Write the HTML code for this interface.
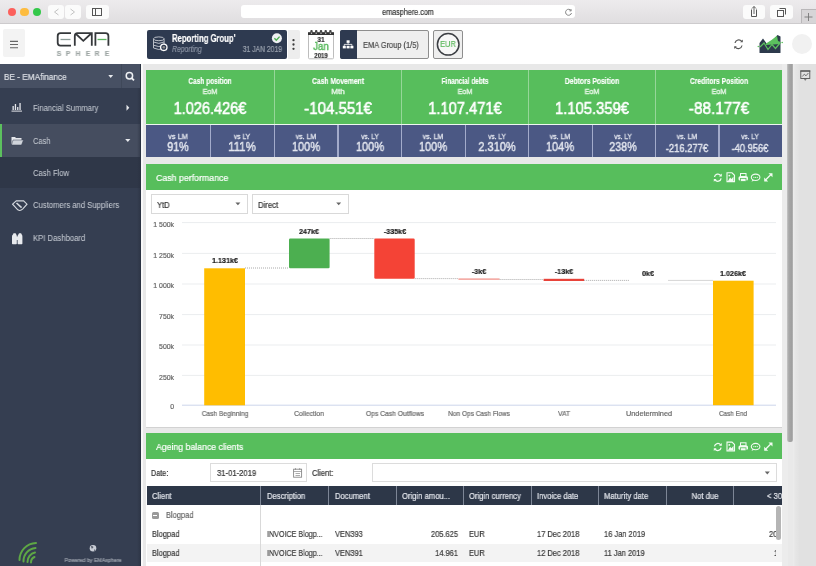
<!DOCTYPE html>
<html><head><meta charset="utf-8">
<style>
*{margin:0;padding:0;box-sizing:border-box}
html,body{width:816px;height:566px;overflow:hidden;background:#e9e9e9;font-family:"Liberation Sans",sans-serif}
.a{position:absolute}
.t{position:absolute;white-space:nowrap;line-height:1;-webkit-text-stroke:0.2px currentColor;will-change:transform}
svg{position:absolute;left:0;top:0}
</style></head><body>
<div class="a" style="left:0px;top:0px;width:816px;height:23px;background:linear-gradient(#edebed,#e0dee0);"></div>
<div class="a" style="left:0px;top:23px;width:816px;height:1px;background:#cdcbcd;"></div>
<div class="a" style="left:7.8px;top:7.8px;width:8.4px;height:8.4px;border-radius:50%;background:#fc605c"></div>
<div class="a" style="left:20.3px;top:7.8px;width:8.4px;height:8.4px;border-radius:50%;background:#fdbc40"></div>
<div class="a" style="left:32.8px;top:7.8px;width:8.4px;height:8.4px;border-radius:50%;background:#34c84a"></div>
<div class="a" style="left:48px;top:5px;width:16px;height:14px;background:#fbfbfb;border-radius:3px"></div>
<div class="a" style="left:65px;top:5px;width:16px;height:14px;background:#fbfbfb;border-radius:3px"></div>
<div class="a" style="left:86px;top:5px;width:23px;height:14px;background:#fbfbfb;border-radius:3px"></div>
<div class="a" style="left:241px;top:5px;width:334px;height:13px;background:#ffffff;border-radius:3px"></div>
<div class="t" style="left:408.00px;top:7.80px;font-size:8.5px;color:#333;transform-origin:50% 50%;transform:translateX(-50%) scaleX(0.847);">emasphere.com</div>
<div class="a" style="left:743px;top:5px;width:22px;height:14px;background:#fbfbfb;border-radius:3px"></div>
<div class="a" style="left:770px;top:5px;width:23px;height:14px;background:#fbfbfb;border-radius:3px"></div>
<div class="a" style="left:801px;top:9px;width:15px;height:14px;background:#d7d5d7;border-left:1px solid #b9b7b9;border-top:1px solid #b9b7b9"></div>
<svg width="816" height="24" viewBox="0 0 816 24">
<path d="M58.5 9 L54.5 12 L58.5 15" stroke="#c2c2c2" stroke-width="1" fill="none"/>
<path d="M70.5 9 L74.5 12 L70.5 15" stroke="#c2c2c2" stroke-width="1" fill="none"/>
<rect x="92.5" y="8.5" width="9" height="7" stroke="#555" stroke-width="1" fill="none"/>
<line x1="95.5" y1="8.5" x2="95.5" y2="15.5" stroke="#555" stroke-width="1"/>
<path d="M571 10.5 A3 3 0 1 0 571.5 13" stroke="#777" stroke-width="0.9" fill="none"/>
<path d="M571 9 L571.2 11 L569.3 10.8" stroke="#777" stroke-width="0.8" fill="none"/>
<path d="M751.5 9.5 L751.5 16.5 L756.5 16.5 L756.5 9.5" stroke="#555" stroke-width="1" fill="none"/>
<path d="M754 14 L754 6.5 M752 8.5 L754 6.5 L756 8.5" stroke="#555" stroke-width="0.9" fill="none"/>
<rect x="777.5" y="10.5" width="6" height="6" stroke="#555" stroke-width="1" fill="none"/>
<path d="M779.5 8.5 L785.5 8.5 L785.5 14.5" stroke="#555" stroke-width="1" fill="none"/>
<path d="M808.5 13 L808.5 21 M804.5 17 L812.5 17" stroke="#777" stroke-width="0.9"/>
</svg>
<div class="a" style="left:0px;top:24px;width:816px;height:40px;background:#ffffff;"></div>
<div class="a" style="left:3px;top:29px;width:22px;height:28px;background:#f3f3f3;border-radius:2px"></div>
<svg width="816" height="64" viewBox="0 0 816 64">
<path d="M10 41.3 H18 M10 44.5 H18 M10 47.7 H18" stroke="#666" stroke-width="1.15"/>
</svg>
<svg width="816" height="64" viewBox="0 0 816 64">
<g fill="none" stroke="#35383b" stroke-width="1.8">
<path d="M71 33.2 H60.5 Q57.7 33.2 57.7 36 V42.8 Q57.7 45.6 60.5 45.6 H71"/>
<path d="M74.8 45.8 V36 Q74.8 33.2 77.6 33.2 H91.8 V45.8 M75.5 33.5 L83.3 40.8 L91.2 33.5"/>
<path d="M95.4 45.8 V33.2 H105.6 Q108.4 33.2 108.4 36 V45.8"/>
</g>
<path d="M60.5 39.5 H70.5" stroke="#8c9c98" stroke-width="1.3"/>
<path d="M97.5 39.5 H106.5" stroke="#5ab55e" stroke-width="1.3"/>
</svg>
<div class="t" style="left:58.60px;top:50.37px;font-size:7.0px;color:#9ea6a4;font-weight:bold;transform-origin:50% 50%;transform:translateX(-50%) scaleX(0.950);">S</div>
<div class="t" style="left:68.20px;top:50.37px;font-size:7.0px;color:#9ea6a4;font-weight:bold;transform-origin:50% 50%;transform:translateX(-50%) scaleX(0.950);">P</div>
<div class="t" style="left:78.30px;top:50.37px;font-size:7.0px;color:#9ea6a4;font-weight:bold;transform-origin:50% 50%;transform:translateX(-50%) scaleX(0.950);">H</div>
<div class="t" style="left:87.90px;top:50.37px;font-size:7.0px;color:#9ea6a4;font-weight:bold;transform-origin:50% 50%;transform:translateX(-50%) scaleX(0.950);">E</div>
<div class="t" style="left:97.20px;top:50.37px;font-size:7.0px;color:#9ea6a4;font-weight:bold;transform-origin:50% 50%;transform:translateX(-50%) scaleX(0.950);">R</div>
<div class="t" style="left:107.20px;top:50.37px;font-size:7.0px;color:#9ea6a4;font-weight:bold;transform-origin:50% 50%;transform:translateX(-50%) scaleX(0.950);">E</div>
<div class="a" style="left:146.6px;top:30px;width:140.9px;height:28.6px;background:#2e3a50;border-radius:2px"></div>
<div class="a" style="left:287.5px;top:29.5px;width:12px;height:29px;background:#ededed;border-radius:0 2px 2px 0"></div>
<svg width="816" height="64" viewBox="0 0 816 64">
<g fill="none" stroke="#b9bec6" stroke-width="1">
<ellipse cx="158.8" cy="38.8" rx="5.3" ry="1.9"/>
<path d="M153.5 38.8 V48 Q158.8 51 164.1 48 V38.8 M153.5 42 Q158.8 44.8 164.1 42 M153.5 45.2 Q158.8 48 164.1 45.2"/>
</g>
<circle cx="163.8" cy="47.3" r="3.2" fill="#2e3a50" stroke="#fff" stroke-width="1.3"/>
<circle cx="163.8" cy="47.3" r="1.3" fill="#888"/>
<circle cx="276.9" cy="38.2" r="5" fill="#eef0f2"/>
<path d="M274.4 38.3 L276.3 40.2 L279.6 36.6" stroke="#4caf50" stroke-width="1.4" fill="none"/>
<circle cx="293.5" cy="40.2" r="1.15" fill="#3c3c3c"/>
<circle cx="293.5" cy="44.5" r="1.15" fill="#3c3c3c"/>
<circle cx="293.5" cy="48.8" r="1.15" fill="#3c3c3c"/>
</svg>
<div class="t" style="left:172.30px;top:34.17px;font-size:10.2px;color:#ffffff;font-weight:bold;transform-origin:0 50%;transform:scaleX(0.756);">Reporting Group'</div>
<div class="t" style="left:172.30px;top:44.52px;font-size:8.6px;color:#8a93a3;font-style:italic;transform-origin:0 50%;transform:scaleX(0.796);">Reporting</div>
<div class="t" style="left:282.30px;top:44.52px;font-size:8.6px;color:#9aa2ae;transform-origin:100% 50%;transform:translateX(-100%) scaleX(0.790);">31 JAN 2019</div>
<svg width="816" height="64" viewBox="0 0 816 64">
<rect x="308.5" y="33" width="25" height="25.8" rx="1" fill="#fff" stroke="#bdbdbd" stroke-width="1"/>
<rect x="308" y="32.2" width="26" height="2.8" fill="#333"/>
<g fill="#444">
<rect x="310.3" y="30" width="2.4" height="3.6" rx="1"/>
<rect x="315" y="30" width="2.4" height="3.6" rx="1"/>
<rect x="319.8" y="30" width="2.4" height="3.6" rx="1"/>
<rect x="324.5" y="30" width="2.4" height="3.6" rx="1"/>
<rect x="329.2" y="30" width="2.4" height="3.6" rx="1"/>
</g>
<g fill="#ccc">
<circle cx="311.5" cy="33.3" r="0.7"/><circle cx="316.2" cy="33.3" r="0.7"/><circle cx="321" cy="33.3" r="0.7"/><circle cx="325.7" cy="33.3" r="0.7"/><circle cx="330.4" cy="33.3" r="0.7"/>
</g>
</svg>
<div class="t" style="left:321.00px;top:35.91px;font-size:7.2px;color:#333;font-weight:bold;transform-origin:50% 50%;transform:translateX(-50%) scaleX(0.900);">31</div>
<div class="t" style="left:321.00px;top:41.32px;font-size:11.2px;color:#62bd66;transform-origin:50% 50%;transform:translateX(-50%) scaleX(0.864);-webkit-text-stroke:0.55px #62bd66;">Jan</div>
<div class="t" style="left:321.00px;top:52.61px;font-size:6.6px;color:#333;font-weight:bold;transform-origin:50% 50%;transform:translateX(-50%) scaleX(0.920);">2019</div>
<div class="a" style="left:339.5px;top:29.5px;width:89px;height:29.5px;background:#efefef;border:1px solid #8e8e8e;border-radius:2px"></div>
<div class="a" style="left:339.5px;top:29.5px;width:17.5px;height:29.5px;background:#2e3a50;border-radius:2px 0 0 2px"></div>
<svg width="816" height="64" viewBox="0 0 816 64">
<g fill="#fff">
<rect x="346.6" y="40.3" width="3" height="2.6"/>
<rect x="342.8" y="45.8" width="3" height="2.6"/>
<rect x="346.6" y="45.8" width="3" height="2.6"/>
<rect x="350.4" y="45.8" width="3" height="2.6"/>
</g>
<path d="M348.1 42.9 V44.4 M344.3 45.8 V44.4 H351.9 V45.8" stroke="#fff" stroke-width="0.8" fill="none"/>
</svg>
<div class="t" style="left:362.50px;top:40.17px;font-size:9.6px;color:#4a4a4a;transform-origin:0 50%;transform:scaleX(0.775);">EMA Group (1/5)</div>
<div class="a" style="left:433.3px;top:29.5px;width:29.7px;height:29.5px;background:#efefef;border:1px solid #8e8e8e;border-radius:2px"></div>
<svg width="816" height="64" viewBox="0 0 816 64">
<circle cx="448.2" cy="44.3" r="10.8" fill="#f7f7f7" stroke="#3c3f44" stroke-width="1.5"/>
</svg>
<div class="t" style="left:448.20px;top:40.19px;font-size:8.4px;color:#5cb85c;transform-origin:50% 50%;transform:translateX(-50%) scaleX(0.880);">EUR</div>
<svg width="816" height="64" viewBox="0 0 816 64">
<path d="M735 43 A3.8 3.8 0 0 1 741.7 41.3 M742 45.5 A3.8 3.8 0 0 1 735.3 47.2" stroke="#555" stroke-width="1.2" fill="none"/>
<path d="M742.8 39.6 V42.2 H740.2 Z M734.2 48.9 V46.3 H736.8 Z" fill="#555"/>
<path d="M759.5 43 L763 38.5 L767 44 L772 41 L777.5 35 L780.5 36.5 L780.5 52.5 Q780.5 53 780 53 L760 53 Q759.5 53 759.5 52.5 Z" fill="#2d3a4c"/>
<path d="M766 43.5 L771.5 40 L777 35.7 L778 41 L780.5 42 L780.5 44 L766 45 Z" fill="#5bc05e"/>
<path d="M760 47 L764 43 L768 49.5 L772 44.5 L775.5 48.5 L780 43" stroke="#5bc05e" stroke-width="1.2" fill="none"/>
<circle cx="758.3" cy="46.5" r="0.8" fill="#5bc05e"/>
<circle cx="782.2" cy="42.5" r="0.8" fill="#5bc05e"/>
</svg>
<div class="a" style="left:792px;top:34px;width:20px;height:20px;border-radius:50%;background:#f1f1f1"></div>
<div class="a" style="left:0px;top:64px;width:141px;height:502px;background:#353e51;"></div>
<div class="a" style="left:0px;top:64px;width:141px;height:24px;background:#475063;"></div>
<div class="a" style="left:120.5px;top:64px;width:1px;height:24px;background:#3f4859;"></div>
<div class="a" style="left:0px;top:123.5px;width:141px;height:33.5px;background:#454d5f;"></div>
<div class="a" style="left:0px;top:123.5px;width:2px;height:33.5px;background:#5cc05e;"></div>
<div class="a" style="left:0px;top:157px;width:141px;height:31px;background:#2f3748;"></div>
<div class="a" style="left:137px;top:88px;width:4px;height:478px;background:linear-gradient(90deg,rgba(40,47,62,0),rgba(40,47,62,0.6));"></div>
<div class="a" style="left:140.3px;top:64px;width:0.9px;height:502px;background:#2b3342;"></div>
<div class="t" style="left:4.40px;top:72.34px;font-size:9.4px;color:#dde0e6;transform-origin:0 50%;transform:scaleX(0.877);">BE - EMAfinance</div>
<div class="t" style="left:32.90px;top:104.05px;font-size:8.8px;color:#c3c8d0;transform-origin:0 50%;transform:scaleX(0.868);-webkit-text-stroke:0.05px #c3c8d0;">Financial Summary</div>
<div class="t" style="left:32.90px;top:136.85px;font-size:8.8px;color:#c3c8d0;transform-origin:0 50%;transform:scaleX(0.852);-webkit-text-stroke:0.05px #c3c8d0;">Cash</div>
<div class="t" style="left:32.90px;top:169.15px;font-size:8.8px;color:#c3c8d0;transform-origin:0 50%;transform:scaleX(0.866);-webkit-text-stroke:0.05px #c3c8d0;">Cash Flow</div>
<div class="t" style="left:32.90px;top:201.35px;font-size:8.8px;color:#c3c8d0;transform-origin:0 50%;transform:scaleX(0.874);-webkit-text-stroke:0.05px #c3c8d0;">Customers and Suppliers</div>
<div class="t" style="left:32.90px;top:234.15px;font-size:8.8px;color:#c3c8d0;transform-origin:0 50%;transform:scaleX(0.876);-webkit-text-stroke:0.05px #c3c8d0;">KPI Dashboard</div>
<svg width="141" height="566" viewBox="0 0 141 566">
<path d="M108.3 75 L113.1 75 L110.7 78 Z" fill="#e8eaee"/>
<circle cx="129.4" cy="75.8" r="3.2" stroke="#eef0f3" stroke-width="1.5" fill="none"/>
<path d="M131.7 78.1 L134 80.4" stroke="#eef0f3" stroke-width="1.8"/>
<g fill="#e5e7eb">
<rect x="12.5" y="106" width="1.3" height="4"/>
<rect x="14.8" y="104" width="1.3" height="6"/>
<rect x="17.1" y="107" width="1.3" height="3"/>
<rect x="19.4" y="103" width="1.3" height="7"/>
<rect x="11.5" y="110.6" width="10.5" height="1"/>
</g>
<path d="M126.5 104.8 L129.3 107.8 L126.5 110.8 Z" fill="#e8eaee"/>
<path d="M125.2 139 L130.4 139 L127.8 142 Z" fill="#e8eaee"/>
<path d="M11.5 137 H15 L16 138 H21.5 V144 H11.5 Z" fill="#e5e7eb"/>
<path d="M13 140 H23.5 L21.5 145 H11.5 Z" fill="#cfd3da" stroke="#353e51" stroke-width="0.5"/>
<path d="M12.6 204.2 L16.3 200.9 H23.6 L27 204.2 L22.6 209.2 Q20.2 211.4 17.8 209.8 Z" fill="none" stroke="#d5d9df" stroke-width="1.1"/>
<path d="M16.5 203 L21.6 207.6" stroke="#d5d9df" stroke-width="1.6"/>
<g fill="#e8eaee">
<path d="M12 236.5 Q12 235 13 234.5 L13.5 233.2 H15.6 L16.3 234.5 Q16.8 235 16.8 236.5 V243.5 Q16.8 244.2 16.1 244.2 H12.7 Q12 244.2 12 243.5 Z"/>
<path d="M17.6 236.5 Q17.6 235 18.4 234.5 L19 233.2 H21.1 L21.7 234.5 Q22.4 235 22.4 236.5 V243.5 Q22.4 244.2 21.7 244.2 H18.3 Q17.6 244.2 17.6 243.5 Z"/>
<rect x="16" y="236.5" width="2.4" height="3.5"/>
</g>
<g stroke="#5ea845" stroke-width="2" fill="none" stroke-linecap="round">
<path d="M19.5 560 A17 17 0 0 1 36 543"/>
<path d="M23.5 561.5 A13 13 0 0 1 35.5 548"/>
<path d="M27.5 562 A9.5 9.5 0 0 1 35 552.5"/>
<path d="M31 562.5 A6 6 0 0 1 34.5 557"/>
</g>
<circle cx="93" cy="548.3" r="3.3" fill="#c9cdd6"/><path d="M91 546 Q92.5 545.5 93.5 547 Q92.5 549 91.5 548.5 Z M94 549.5 Q95.5 549 95.5 550.5 L94 551 Z" fill="#5b6270"/>
</svg>
<div class="t" style="left:93.20px;top:557.51px;font-size:5.3px;color:#9aa0ab;transform-origin:50% 50%;transform:translateX(-50%) scaleX(0.997);">Powered by EMAsphere</div>
<div class="a" style="left:141px;top:64px;width:647px;height:502px;background:#e8e8e8;"></div>
<div class="a" style="left:141.2px;top:64px;width:1.4px;height:502px;background:#f8f8f8;"></div>
<div class="a" style="left:146.4px;top:69.8px;width:635.5px;height:53.8px;background:#57be5c;"></div>
<div class="a" style="left:146.4px;top:123.6px;width:635.5px;height:1.6px;background:#eef7ee;"></div>
<div class="a" style="left:146.4px;top:125.2px;width:635.5px;height:32.2px;background:#4b5884;"></div>
<div class="t" style="left:210.10px;top:76.59px;font-size:8.4px;color:#ffffff;font-weight:bold;transform-origin:50% 50%;transform:translateX(-50%) scaleX(0.780);-webkit-text-stroke:0.15px #fff;">Cash position</div>
<div class="t" style="left:210.10px;top:87.97px;font-size:7.6px;color:#e2f4e2;transform-origin:50% 50%;transform:translateX(-50%) scaleX(0.947);-webkit-text-stroke:0.4px #e2f4e2;">EoM</div>
<div class="t" style="left:210.10px;top:99.69px;font-size:16.2px;color:#ffffff;transform-origin:50% 50%;transform:translateX(-50%) scaleX(0.898);-webkit-text-stroke:0.6px #fff;">1.026.426€</div>
<div class="a" style="left:209.90000000000003px;top:125.2px;width:1.2px;height:32.2px;background:#a3abcb;"></div>
<div class="t" style="left:178.25px;top:133.17px;font-size:7.6px;color:#e2e5ee;transform-origin:50% 50%;transform:translateX(-50%) scaleX(0.967);-webkit-text-stroke:0.3px #e2e5ee;">vs LM</div>
<div class="t" style="left:178.25px;top:140.29px;font-size:13.6px;color:#e2e5ee;transform-origin:50% 50%;transform:translateX(-50%) scaleX(0.790);-webkit-text-stroke:0.45px #e2e5ee;">91%</div>
<div class="t" style="left:241.95px;top:133.17px;font-size:7.6px;color:#e2e5ee;transform-origin:50% 50%;transform:translateX(-50%) scaleX(0.889);-webkit-text-stroke:0.3px #e2e5ee;">vs LY</div>
<div class="t" style="left:241.95px;top:140.29px;font-size:13.6px;color:#e2e5ee;transform-origin:50% 50%;transform:translateX(-50%) scaleX(0.842);-webkit-text-stroke:0.45px #e2e5ee;">111%</div>
<div class="a" style="left:273.5px;top:69.8px;width:1.3px;height:53.8px;background:#96d699;"></div>
<div class="a" style="left:273.5px;top:125.2px;width:1.3px;height:32.2px;background:#a3abcb;"></div>
<div class="t" style="left:337.65px;top:76.59px;font-size:8.4px;color:#ffffff;font-weight:bold;transform-origin:50% 50%;transform:translateX(-50%) scaleX(0.810);-webkit-text-stroke:0.15px #fff;">Cash Movement</div>
<div class="t" style="left:337.65px;top:87.97px;font-size:7.6px;color:#e2f4e2;transform-origin:50% 50%;transform:translateX(-50%) scaleX(1.066);-webkit-text-stroke:0.4px #e2f4e2;">Mth</div>
<div class="t" style="left:337.65px;top:99.69px;font-size:16.2px;color:#ffffff;transform-origin:50% 50%;transform:translateX(-50%) scaleX(0.928);-webkit-text-stroke:0.6px #fff;">-104.551€</div>
<div class="a" style="left:337.45px;top:125.2px;width:1.2px;height:32.2px;background:#a3abcb;"></div>
<div class="t" style="left:305.73px;top:133.17px;font-size:7.6px;color:#e2e5ee;transform-origin:50% 50%;transform:translateX(-50%) scaleX(0.925);-webkit-text-stroke:0.3px #e2e5ee;">vs. LM</div>
<div class="t" style="left:305.73px;top:140.29px;font-size:13.6px;color:#e2e5ee;transform-origin:50% 50%;transform:translateX(-50%) scaleX(0.811);-webkit-text-stroke:0.45px #e2e5ee;">100%</div>
<div class="t" style="left:369.57px;top:133.17px;font-size:7.6px;color:#e2e5ee;transform-origin:50% 50%;transform:translateX(-50%) scaleX(0.851);-webkit-text-stroke:0.3px #e2e5ee;">vs. LY</div>
<div class="t" style="left:369.57px;top:140.29px;font-size:13.6px;color:#e2e5ee;transform-origin:50% 50%;transform:translateX(-50%) scaleX(0.811);-webkit-text-stroke:0.45px #e2e5ee;">100%</div>
<div class="a" style="left:401.2px;top:69.8px;width:1.3px;height:53.8px;background:#96d699;"></div>
<div class="a" style="left:401.2px;top:125.2px;width:1.3px;height:32.2px;background:#a3abcb;"></div>
<div class="t" style="left:464.85px;top:76.59px;font-size:8.4px;color:#ffffff;font-weight:bold;transform-origin:50% 50%;transform:translateX(-50%) scaleX(0.769);-webkit-text-stroke:0.15px #fff;">Financial debts</div>
<div class="t" style="left:464.85px;top:87.97px;font-size:7.6px;color:#e2f4e2;transform-origin:50% 50%;transform:translateX(-50%) scaleX(0.947);-webkit-text-stroke:0.4px #e2f4e2;">EoM</div>
<div class="t" style="left:464.85px;top:99.69px;font-size:16.2px;color:#ffffff;transform-origin:50% 50%;transform:translateX(-50%) scaleX(0.907);-webkit-text-stroke:0.6px #fff;">1.107.471€</div>
<div class="a" style="left:464.65000000000003px;top:125.2px;width:1.2px;height:32.2px;background:#a3abcb;"></div>
<div class="t" style="left:433.18px;top:133.17px;font-size:7.6px;color:#e2e5ee;transform-origin:50% 50%;transform:translateX(-50%) scaleX(0.925);-webkit-text-stroke:0.3px #e2e5ee;">vs. LM</div>
<div class="t" style="left:433.18px;top:140.29px;font-size:13.6px;color:#e2e5ee;transform-origin:50% 50%;transform:translateX(-50%) scaleX(0.811);-webkit-text-stroke:0.45px #e2e5ee;">100%</div>
<div class="t" style="left:496.53px;top:133.17px;font-size:7.6px;color:#e2e5ee;transform-origin:50% 50%;transform:translateX(-50%) scaleX(0.851);-webkit-text-stroke:0.3px #e2e5ee;">vs. LY</div>
<div class="t" style="left:496.53px;top:140.29px;font-size:13.6px;color:#e2e5ee;transform-origin:50% 50%;transform:translateX(-50%) scaleX(0.809);-webkit-text-stroke:0.45px #e2e5ee;">2.310%</div>
<div class="a" style="left:527.9000000000001px;top:69.8px;width:1.3px;height:53.8px;background:#96d699;"></div>
<div class="a" style="left:527.9000000000001px;top:125.2px;width:1.3px;height:32.2px;background:#a3abcb;"></div>
<div class="t" style="left:591.70px;top:76.59px;font-size:8.4px;color:#ffffff;font-weight:bold;transform-origin:50% 50%;transform:translateX(-50%) scaleX(0.812);-webkit-text-stroke:0.15px #fff;">Debtors Position</div>
<div class="t" style="left:591.70px;top:87.97px;font-size:7.6px;color:#e2f4e2;transform-origin:50% 50%;transform:translateX(-50%) scaleX(0.947);-webkit-text-stroke:0.4px #e2f4e2;">EoM</div>
<div class="t" style="left:591.70px;top:99.69px;font-size:16.2px;color:#ffffff;transform-origin:50% 50%;transform:translateX(-50%) scaleX(0.913);-webkit-text-stroke:0.6px #fff;">1.105.359€</div>
<div class="a" style="left:591.5px;top:125.2px;width:1.2px;height:32.2px;background:#a3abcb;"></div>
<div class="t" style="left:559.95px;top:133.17px;font-size:7.6px;color:#e2e5ee;transform-origin:50% 50%;transform:translateX(-50%) scaleX(0.925);-webkit-text-stroke:0.3px #e2e5ee;">vs. LM</div>
<div class="t" style="left:559.95px;top:140.29px;font-size:13.6px;color:#e2e5ee;transform-origin:50% 50%;transform:translateX(-50%) scaleX(0.811);-webkit-text-stroke:0.45px #e2e5ee;">104%</div>
<div class="t" style="left:623.45px;top:133.17px;font-size:7.6px;color:#e2e5ee;transform-origin:50% 50%;transform:translateX(-50%) scaleX(0.851);-webkit-text-stroke:0.3px #e2e5ee;">vs. LY</div>
<div class="t" style="left:623.45px;top:140.29px;font-size:13.6px;color:#e2e5ee;transform-origin:50% 50%;transform:translateX(-50%) scaleX(0.791);-webkit-text-stroke:0.45px #e2e5ee;">238%</div>
<div class="a" style="left:654.9000000000001px;top:69.8px;width:1.3px;height:53.8px;background:#96d699;"></div>
<div class="a" style="left:654.9000000000001px;top:125.2px;width:1.3px;height:32.2px;background:#a3abcb;"></div>
<div class="t" style="left:718.55px;top:76.59px;font-size:8.4px;color:#ffffff;font-weight:bold;transform-origin:50% 50%;transform:translateX(-50%) scaleX(0.802);-webkit-text-stroke:0.15px #fff;">Creditors Position</div>
<div class="t" style="left:718.55px;top:87.97px;font-size:7.6px;color:#e2f4e2;transform-origin:50% 50%;transform:translateX(-50%) scaleX(0.947);-webkit-text-stroke:0.4px #e2f4e2;">EoM</div>
<div class="t" style="left:718.55px;top:99.69px;font-size:16.2px;color:#ffffff;transform-origin:50% 50%;transform:translateX(-50%) scaleX(0.944);-webkit-text-stroke:0.6px #fff;">-88.177€</div>
<div class="a" style="left:718.3499999999999px;top:125.2px;width:1.2px;height:32.2px;background:#a3abcb;"></div>
<div class="t" style="left:686.88px;top:133.17px;font-size:7.6px;color:#e2e5ee;transform-origin:50% 50%;transform:translateX(-50%) scaleX(0.925);-webkit-text-stroke:0.3px #e2e5ee;">vs. LM</div>
<div class="t" style="left:686.88px;top:142.66px;font-size:10.8px;color:#e2e5ee;transform-origin:50% 50%;transform:translateX(-50%) scaleX(0.872);-webkit-text-stroke:0.45px #e2e5ee;">-216.277€</div>
<div class="t" style="left:750.22px;top:133.17px;font-size:7.6px;color:#e2e5ee;transform-origin:50% 50%;transform:translateX(-50%) scaleX(0.851);-webkit-text-stroke:0.3px #e2e5ee;">vs. LY</div>
<div class="t" style="left:750.22px;top:142.66px;font-size:10.8px;color:#e2e5ee;transform-origin:50% 50%;transform:translateX(-50%) scaleX(0.861);-webkit-text-stroke:0.45px #e2e5ee;">-40.956€</div>
<div class="a" style="left:146px;top:164px;width:636px;height:263.5px;background:#ffffff;border-bottom:1px solid #d2d2d2"></div>
<div class="a" style="left:146px;top:164px;width:636px;height:26px;background:#57be5c;"></div>
<div class="t" style="left:155.70px;top:173.07px;font-size:9.6px;color:#ffffff;transform-origin:0 50%;transform:scaleX(0.917);">Cash performance</div>
<svg width="816" height="566" viewBox="0 0 816 566">
<g fill="none" stroke="#f2fbf2" stroke-width="1.3">
<path d="M714.5 177 A3.4 3.4 0 0 1 720.6 175.5 M721.1 178.4 A3.4 3.4 0 0 1 715 179.9"/>
</g>
<path d="M721.8 173.6 V176.4 H719 Z M713.8 181.8 V179 H716.6 Z" fill="#f2fbf2"/>
<path d="M727 172.8 H732 L734.5 175.3 V181.6 H727 Z" fill="none" stroke="#f2fbf2" stroke-width="1.1"/>
<path d="M728 181 L730 177.5 L731.5 179 L733.5 176.5 V181 Z" fill="#f2fbf2"/>
<circle cx="729.3" cy="175.6" r="0.9" fill="#f2fbf2"/>
<rect x="740.5" y="173.5" width="5.5" height="3" fill="none" stroke="#f2fbf2" stroke-width="1"/>
<rect x="738.5" y="176.3" width="9.5" height="4.2" rx="1.5" fill="#f2fbf2"/>
<rect x="740.5" y="178.5" width="5.5" height="3" fill="#f2fbf2" stroke="#57be5c" stroke-width="0.8"/>
<ellipse cx="755.6" cy="177.3" rx="4.3" ry="3.2" fill="none" stroke="#f2fbf2" stroke-width="1.1"/>
<path d="M752.5 179.8 L751.5 181.8 L754.5 180.3" fill="#f2fbf2"/>
<circle cx="753.9" cy="177.3" r="0.6" fill="#f2fbf2"/><circle cx="755.6" cy="177.3" r="0.6" fill="#f2fbf2"/><circle cx="757.3" cy="177.3" r="0.6" fill="#f2fbf2"/>
<path d="M765 180.5 L771.5 174" stroke="#f2fbf2" stroke-width="1.3"/>
<path d="M768.5 173.2 H772.5 V177.2 Z M764.2 177.5 V181.5 H768.2 Z" fill="#f2fbf2"/>
</svg>
<div class="a" style="left:151.4px;top:194.4px;width:96.4px;height:19.2px;background:#ffffff;border:1px solid #d9d9d9"></div>
<div class="a" style="left:252.2px;top:194.4px;width:96.4px;height:19.2px;background:#ffffff;border:1px solid #d9d9d9"></div>
<div class="t" style="left:157.30px;top:200.52px;font-size:8.6px;color:#333;transform-origin:0 50%;transform:scaleX(0.886);">YtD</div>
<div class="t" style="left:258.10px;top:200.52px;font-size:8.6px;color:#333;transform-origin:0 50%;transform:scaleX(0.900);">Direct</div>
<svg width="816" height="566" viewBox="0 0 816 566">
<path d="M235.4 202.4 L240.4 202.4 L237.9 205.2 Z M336.2 202.4 L341.2 202.4 L338.7 205.2 Z" fill="#666"/>
<line x1="182" y1="222.6" x2="776" y2="222.6" stroke="#ebedef" stroke-width="1"/>
<line x1="182" y1="253.4" x2="776" y2="253.4" stroke="#ebedef" stroke-width="1"/>
<line x1="182" y1="284.0" x2="776" y2="284.0" stroke="#ebedef" stroke-width="1"/>
<line x1="182" y1="314.6" x2="776" y2="314.6" stroke="#ebedef" stroke-width="1"/>
<line x1="182" y1="345.0" x2="776" y2="345.0" stroke="#ebedef" stroke-width="1"/>
<line x1="182" y1="375.4" x2="776" y2="375.4" stroke="#ebedef" stroke-width="1"/>
<line x1="182" y1="405.2" x2="776" y2="405.2" stroke="#ccd6eb" stroke-width="1"/>
<rect x="204.2" y="268.3" width="40.8" height="137" fill="#ffbd00"/>
<rect x="289" y="238.5" width="40.6" height="29.8" rx="1.2" fill="#4caf50"/>
<rect x="374.3" y="238.5" width="40.4" height="40.2" rx="1.2" fill="#f44336"/>
<rect x="458.4" y="278.5" width="41.2" height="1.2" fill="#f08a82"/>
<rect x="543.6" y="278.8" width="40.6" height="2.2" fill="#e8433a"/>
<rect x="713" y="280.7" width="40.6" height="124.5" fill="#ffbd00"/>
<line x1="245" y1="268" x2="289" y2="268" stroke="#aaa" stroke-width="1" stroke-dasharray="1,1"/>
<line x1="329.6" y1="238.5" x2="374.3" y2="238.5" stroke="#aaa" stroke-width="1" stroke-dasharray="1,1"/>
<line x1="414.7" y1="278.6" x2="458.4" y2="278.6" stroke="#aaa" stroke-width="1" stroke-dasharray="1,1"/>
<line x1="499.6" y1="279.5" x2="543.6" y2="279.5" stroke="#aaa" stroke-width="1" stroke-dasharray="1,1"/>
<line x1="584.2" y1="280.4" x2="629" y2="280.4" stroke="#aaa" stroke-width="1" stroke-dasharray="1,1"/>
<line x1="668.5" y1="280.4" x2="713" y2="280.4" stroke="#aaa" stroke-width="1" stroke-dasharray="1,1"/>
</svg>
<div class="t" style="left:173.80px;top:221.76px;font-size:6.9px;color:#666;transform-origin:100% 50%;transform:translateX(-100%) scaleX(1.000);">1 500k</div>
<div class="t" style="left:173.80px;top:252.56px;font-size:6.9px;color:#666;transform-origin:100% 50%;transform:translateX(-100%) scaleX(1.000);">1 250k</div>
<div class="t" style="left:173.80px;top:283.16px;font-size:6.9px;color:#666;transform-origin:100% 50%;transform:translateX(-100%) scaleX(1.000);">1 000k</div>
<div class="t" style="left:173.80px;top:313.76px;font-size:6.9px;color:#666;transform-origin:100% 50%;transform:translateX(-100%) scaleX(1.000);">750k</div>
<div class="t" style="left:173.80px;top:344.16px;font-size:6.9px;color:#666;transform-origin:100% 50%;transform:translateX(-100%) scaleX(1.000);">500k</div>
<div class="t" style="left:173.80px;top:374.56px;font-size:6.9px;color:#666;transform-origin:100% 50%;transform:translateX(-100%) scaleX(1.000);">250k</div>
<div class="t" style="left:173.80px;top:404.36px;font-size:6.9px;color:#666;transform-origin:100% 50%;transform:translateX(-100%) scaleX(1.000);">0</div>
<div class="t" style="left:224.60px;top:410.79px;font-size:7.1px;color:#6a6a6a;transform-origin:50% 50%;transform:translateX(-50%) scaleX(0.928);">Cash Beginning</div>
<div class="t" style="left:309.40px;top:410.79px;font-size:7.1px;color:#6a6a6a;transform-origin:50% 50%;transform:translateX(-50%) scaleX(0.956);">Collection</div>
<div class="t" style="left:394.50px;top:410.79px;font-size:7.1px;color:#6a6a6a;transform-origin:50% 50%;transform:translateX(-50%) scaleX(0.953);">Ops Cash Outflows</div>
<div class="t" style="left:479.20px;top:410.79px;font-size:7.1px;color:#6a6a6a;transform-origin:50% 50%;transform:translateX(-50%) scaleX(0.921);">Non Ops Cash Flows</div>
<div class="t" style="left:563.80px;top:410.79px;font-size:7.1px;color:#6a6a6a;transform-origin:50% 50%;transform:translateX(-50%) scaleX(0.949);">VAT</div>
<div class="t" style="left:648.60px;top:410.79px;font-size:7.1px;color:#6a6a6a;transform-origin:50% 50%;transform:translateX(-50%) scaleX(1.036);">Undetermined</div>
<div class="t" style="left:733.40px;top:410.79px;font-size:7.1px;color:#6a6a6a;transform-origin:50% 50%;transform:translateX(-50%) scaleX(0.898);">Cash End</div>
<div class="t" style="left:225.00px;top:257.00px;font-size:7.8px;color:#222;font-weight:bold;transform-origin:50% 50%;transform:translateX(-50%) scaleX(0.920);">1.131k€</div>
<div class="t" style="left:309.30px;top:227.60px;font-size:7.8px;color:#222;font-weight:bold;transform-origin:50% 50%;transform:translateX(-50%) scaleX(0.920);">247k€</div>
<div class="t" style="left:394.50px;top:227.60px;font-size:7.8px;color:#222;font-weight:bold;transform-origin:50% 50%;transform:translateX(-50%) scaleX(0.920);">-335k€</div>
<div class="t" style="left:479.40px;top:268.40px;font-size:7.8px;color:#222;font-weight:bold;transform-origin:50% 50%;transform:translateX(-50%) scaleX(0.920);">-3k€</div>
<div class="t" style="left:564.20px;top:268.40px;font-size:7.8px;color:#222;font-weight:bold;transform-origin:50% 50%;transform:translateX(-50%) scaleX(0.920);">-13k€</div>
<div class="t" style="left:648.20px;top:270.00px;font-size:7.8px;color:#222;font-weight:bold;transform-origin:50% 50%;transform:translateX(-50%) scaleX(0.920);">0k€</div>
<div class="t" style="left:733.30px;top:270.00px;font-size:7.8px;color:#222;font-weight:bold;transform-origin:50% 50%;transform:translateX(-50%) scaleX(0.920);">1.026k€</div>
<div class="a" style="left:146px;top:433px;width:636px;height:133px;background:#ffffff;"></div>
<div class="a" style="left:146px;top:433px;width:636px;height:26px;background:#57be5c;"></div>
<div class="t" style="left:156.00px;top:441.90px;font-size:9.8px;color:#ffffff;transform-origin:0 50%;transform:scaleX(0.890);">Ageing balance clients</div>
<svg width="816" height="566" viewBox="0 0 816 566"><g transform="translate(0,269.3)">
<g fill="none" stroke="#f2fbf2" stroke-width="1.3">
<path d="M714.5 177 A3.4 3.4 0 0 1 720.6 175.5 M721.1 178.4 A3.4 3.4 0 0 1 715 179.9"/>
</g>
<path d="M721.8 173.6 V176.4 H719 Z M713.8 181.8 V179 H716.6 Z" fill="#f2fbf2"/>
<path d="M727 172.8 H732 L734.5 175.3 V181.6 H727 Z" fill="none" stroke="#f2fbf2" stroke-width="1.1"/>
<path d="M728 181 L730 177.5 L731.5 179 L733.5 176.5 V181 Z" fill="#f2fbf2"/>
<circle cx="729.3" cy="175.6" r="0.9" fill="#f2fbf2"/>
<rect x="740.5" y="173.5" width="5.5" height="3" fill="none" stroke="#f2fbf2" stroke-width="1"/>
<rect x="738.5" y="176.3" width="9.5" height="4.2" rx="1.5" fill="#f2fbf2"/>
<rect x="740.5" y="178.5" width="5.5" height="3" fill="#f2fbf2" stroke="#57be5c" stroke-width="0.8"/>
<ellipse cx="755.6" cy="177.3" rx="4.3" ry="3.2" fill="none" stroke="#f2fbf2" stroke-width="1.1"/>
<path d="M752.5 179.8 L751.5 181.8 L754.5 180.3" fill="#f2fbf2"/>
<circle cx="753.9" cy="177.3" r="0.6" fill="#f2fbf2"/><circle cx="755.6" cy="177.3" r="0.6" fill="#f2fbf2"/><circle cx="757.3" cy="177.3" r="0.6" fill="#f2fbf2"/>
<path d="M765 180.5 L771.5 174" stroke="#f2fbf2" stroke-width="1.3"/>
<path d="M768.5 173.2 H772.5 V177.2 Z M764.2 177.5 V181.5 H768.2 Z" fill="#f2fbf2"/>
</g></svg>
<div class="t" style="left:151.20px;top:469.02px;font-size:8.6px;color:#333;transform-origin:0 50%;transform:scaleX(0.842);">Date:</div>
<div class="a" style="left:210.2px;top:463.3px;width:96.6px;height:18.8px;background:#ffffff;border:1px solid #dcdcdc"></div>
<div class="t" style="left:216.80px;top:469.02px;font-size:8.6px;color:#333;transform-origin:0 50%;transform:scaleX(0.891);">31-01-2019</div>
<div class="t" style="left:311.70px;top:469.02px;font-size:8.6px;color:#333;transform-origin:0 50%;transform:scaleX(0.882);">Client:</div>
<div class="a" style="left:371.5px;top:463.2px;width:405.2px;height:19.2px;background:#ffffff;border:1px solid #dcdcdc"></div>
<svg width="816" height="566" viewBox="0 0 816 566">
<rect x="293.6" y="469.2" width="8" height="8" fill="none" stroke="#888" stroke-width="0.9"/>
<path d="M293.6 471.5 H301.6 M295.5 473.5 H300 M295.5 475.5 H300 M295.5 468 V470 M299.7 468 V470" stroke="#888" stroke-width="0.7"/>
<path d="M764.8 471.6 L769.8 471.6 L767.3 474.4 Z" fill="#666"/>
</svg>
<div class="a" style="left:146.5px;top:486.3px;width:635.5px;height:18.8px;background:#2d3748;"></div>
<div class="a" style="left:260.2px;top:486.3px;width:1px;height:18.8px;background:#7d8696;"></div>
<div class="a" style="left:328.2px;top:486.3px;width:1px;height:18.8px;background:#7d8696;"></div>
<div class="a" style="left:395.9px;top:486.3px;width:1px;height:18.8px;background:#7d8696;"></div>
<div class="a" style="left:463.2px;top:486.3px;width:1px;height:18.8px;background:#7d8696;"></div>
<div class="a" style="left:530.6px;top:486.3px;width:1px;height:18.8px;background:#7d8696;"></div>
<div class="a" style="left:598.2px;top:486.3px;width:1px;height:18.8px;background:#7d8696;"></div>
<div class="a" style="left:665.8px;top:486.3px;width:1px;height:18.8px;background:#7d8696;"></div>
<div class="a" style="left:733.4px;top:486.3px;width:1px;height:18.8px;background:#7d8696;"></div>
<div class="a" style="left:0;top:0;width:781.8px;height:566px;overflow:hidden"><div class="t" style="left:151.80px;top:491.95px;font-size:8.8px;color:#e3e6ec;transform-origin:0 50%;transform:scaleX(0.870);">Client</div>
</div><div class="a" style="left:0;top:0;width:781.8px;height:566px;overflow:hidden"><div class="t" style="left:266.80px;top:491.95px;font-size:8.8px;color:#e3e6ec;transform-origin:0 50%;transform:scaleX(0.870);">Description</div>
</div><div class="a" style="left:0;top:0;width:781.8px;height:566px;overflow:hidden"><div class="t" style="left:334.70px;top:491.95px;font-size:8.8px;color:#e3e6ec;transform-origin:0 50%;transform:scaleX(0.870);">Document</div>
</div><div class="a" style="left:0;top:0;width:781.8px;height:566px;overflow:hidden"><div class="t" style="left:401.80px;top:491.95px;font-size:8.8px;color:#e3e6ec;transform-origin:0 50%;transform:scaleX(0.870);">Origin amou...</div>
</div><div class="a" style="left:0;top:0;width:781.8px;height:566px;overflow:hidden"><div class="t" style="left:469.40px;top:491.95px;font-size:8.8px;color:#e3e6ec;transform-origin:0 50%;transform:scaleX(0.870);">Origin currency</div>
</div><div class="a" style="left:0;top:0;width:781.8px;height:566px;overflow:hidden"><div class="t" style="left:537.00px;top:491.95px;font-size:8.8px;color:#e3e6ec;transform-origin:0 50%;transform:scaleX(0.870);">Invoice date</div>
</div><div class="a" style="left:0;top:0;width:781.8px;height:566px;overflow:hidden"><div class="t" style="left:604.30px;top:491.95px;font-size:8.8px;color:#e3e6ec;transform-origin:0 50%;transform:scaleX(0.870);">Maturity date</div>
</div><div class="a" style="left:0;top:0;width:781.8px;height:566px;overflow:hidden"><div class="t" style="left:766.80px;top:491.95px;font-size:8.8px;color:#e3e6ec;transform-origin:0 50%;transform:scaleX(0.870);">&lt; 30</div>
</div><div class="t" style="left:704.70px;top:491.95px;font-size:8.8px;color:#e3e6ec;transform-origin:50% 50%;transform:translateX(-50%) scaleX(0.870);">Not due</div>
<div class="a" style="left:146.5px;top:544px;width:635.5px;height:17.8px;background:#f3f3f3;"></div>
<div class="a" style="left:260.2px;top:505px;width:1px;height:61px;background:#d9d9d9;"></div>
<div class="a" style="left:152px;top:511.8px;width:6.8px;height:6.8px;background:#999999;border-radius:1.5px"></div>
<div class="a" style="left:153.4px;top:514.7px;width:4px;height:1px;background:#ffffff;"></div>
<div class="t" style="left:165.60px;top:510.95px;font-size:8.8px;color:#666;transform-origin:0 50%;transform:scaleX(0.850);">Blogpad</div>
<div class="t" style="left:151.80px;top:529.75px;font-size:8.8px;color:#3a3a3a;transform-origin:0 50%;transform:scaleX(0.850);">Blogpad</div>
<div class="t" style="left:266.80px;top:529.75px;font-size:8.8px;color:#3a3a3a;transform-origin:0 50%;transform:scaleX(0.813);">INVOICE Blogp...</div>
<div class="t" style="left:334.70px;top:529.75px;font-size:8.8px;color:#3a3a3a;transform-origin:0 50%;transform:scaleX(0.850);">VEN393</div>
<div class="t" style="left:457.60px;top:529.75px;font-size:8.8px;color:#3a3a3a;transform-origin:100% 50%;transform:translateX(-100%) scaleX(0.850);">205.625</div>
<div class="t" style="left:469.40px;top:529.75px;font-size:8.8px;color:#3a3a3a;transform-origin:0 50%;transform:scaleX(0.850);">EUR</div>
<div class="t" style="left:537.00px;top:529.75px;font-size:8.8px;color:#3a3a3a;transform-origin:0 50%;transform:scaleX(0.850);">17 Dec 2018</div>
<div class="t" style="left:604.30px;top:529.75px;font-size:8.8px;color:#3a3a3a;transform-origin:0 50%;transform:scaleX(0.850);">16 Jan 2019</div>
<div class="a" style="left:0;top:0;width:776px;height:566px;overflow:hidden"><div class="t" style="left:768.60px;top:529.75px;font-size:8.8px;color:#3a3a3a;transform-origin:0 50%;transform:scaleX(0.850);">20</div>
</div><div class="t" style="left:151.80px;top:548.85px;font-size:8.8px;color:#3a3a3a;transform-origin:0 50%;transform:scaleX(0.850);">Blogpad</div>
<div class="t" style="left:266.80px;top:548.85px;font-size:8.8px;color:#3a3a3a;transform-origin:0 50%;transform:scaleX(0.813);">INVOICE Blogp...</div>
<div class="t" style="left:334.70px;top:548.85px;font-size:8.8px;color:#3a3a3a;transform-origin:0 50%;transform:scaleX(0.850);">VEN391</div>
<div class="t" style="left:457.60px;top:548.85px;font-size:8.8px;color:#3a3a3a;transform-origin:100% 50%;transform:translateX(-100%) scaleX(0.850);">14.961</div>
<div class="t" style="left:469.40px;top:548.85px;font-size:8.8px;color:#3a3a3a;transform-origin:0 50%;transform:scaleX(0.850);">EUR</div>
<div class="t" style="left:537.00px;top:548.85px;font-size:8.8px;color:#3a3a3a;transform-origin:0 50%;transform:scaleX(0.850);">12 Dec 2018</div>
<div class="t" style="left:604.30px;top:548.85px;font-size:8.8px;color:#3a3a3a;transform-origin:0 50%;transform:scaleX(0.850);">11 Jan 2019</div>
<div class="a" style="left:0;top:0;width:776px;height:566px;overflow:hidden"><div class="t" style="left:774.20px;top:548.85px;font-size:8.8px;color:#3a3a3a;transform-origin:0 50%;transform:scaleX(0.850);">1</div>
</div><div class="a" style="left:775.7px;top:506px;width:5.2px;height:33.5px;background:#b5b5b5;border-radius:2.5px"></div>
<div class="a" style="left:782px;top:64px;width:6px;height:502px;background:#ececec;"></div>
<div class="a" style="left:787px;top:64px;width:6.2px;height:378px;background:linear-gradient(90deg,#c8c8c8,#a8a8a8 30%,#9f9f9f 80%,#b8b8b8);border-radius:0 0 2.5px 2.5px"></div>
<div class="a" style="left:793.2px;top:64px;width:6px;height:502px;background:linear-gradient(90deg,#ececec,#e6e6e6 40%,#e2e2e2);"></div>
<div class="a" style="left:799.2px;top:64px;width:16.8px;height:502px;background:#e1e1e1;"></div>
<svg width="816" height="566" viewBox="0 0 816 566">
<rect x="800.8" y="71" width="9" height="7.5" fill="none" stroke="#555" stroke-width="0.9"/>
<path d="M800.3 71 H810.3" stroke="#555" stroke-width="1.2"/>
<path d="M802.3 76.5 L804.3 74.2 L806 75.8 L808.4 73" stroke="#555" stroke-width="0.8" fill="none"/>
<path d="M804.3 78.5 L805.3 80.3 L806.3 78.5" stroke="#555" stroke-width="0.8" fill="none"/>
</svg>

</body></html>
